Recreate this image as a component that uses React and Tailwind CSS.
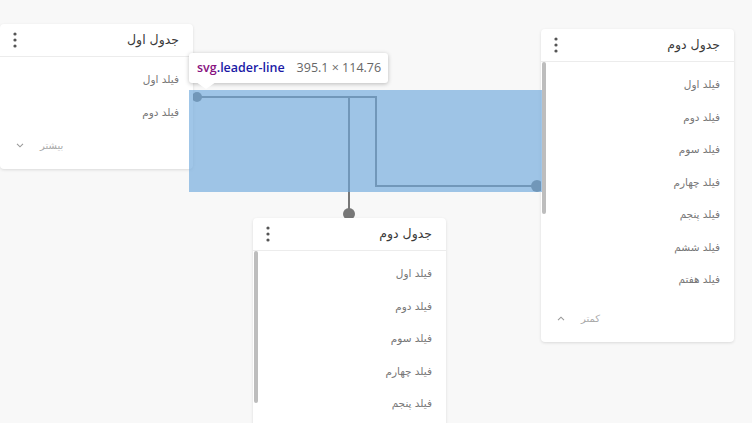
import React from "react";

const persian = { fontFamily: '"DejaVu Sans", "Noto Sans", sans-serif' };

function Dots() {
  return (
    <svg width="6" height="16" viewBox="0 0 6 16" className="text-[#555]">
      <circle cx="3" cy="2" r="1.6" fill="currentColor" />
      <circle cx="3" cy="8" r="1.6" fill="currentColor" />
      <circle cx="3" cy="14" r="1.6" fill="currentColor" />
    </svg>
  );
}

function Chevron({ up }) {
  return (
    <svg width="8" height="5" viewBox="0 0 8 5" className="text-[#999]">
      <path
        d={up ? "M1 4.2 L4 1.2 L7 4.2" : "M1 0.8 L4 3.8 L7 0.8"}
        fill="none"
        stroke="currentColor"
        strokeWidth="1.1"
      />
    </svg>
  );
}

function TableCard({ title, fields, more, scroll, className }) {
  return (
    <div
      dir="rtl"
      style={persian}
      className={`absolute w-[193px] bg-white rounded-[4px] shadow-[0_1px_3px_rgba(0,0,0,0.12)] ${className}`}
    >
      <div className="h-[33px] flex items-center justify-between pr-[14px] pl-[12px] border-b border-[#ececec]">
        <span className="text-[12.5px] text-[#3a3a3a]">{title}</span>
        <Dots />
      </div>
      <div className={`relative pt-[7px] overflow-hidden ${scroll ? "h-[240px]" : ""}`}>
        {scroll && (
          <div className="absolute left-[1px] top-0 w-[4px] h-[152px] bg-[#bdbdbd] rounded-[2px]" />
        )}
        {fields.map((f) => (
          <div key={f} className="h-[32.5px] flex items-center pr-[14px] text-[10.5px] text-[#777]">
            {f}
          </div>
        ))}
      </div>
      {more && (
        <div dir="ltr" className="h-[32px] flex items-center gap-[16px] pl-[16px] mb-[8px]">
          <Chevron up={more.up} />
          <span className="text-[10px] text-[#aaa]" dir="rtl">
            {more.label}
          </span>
        </div>
      )}
    </div>
  );
}

export default function App() {
  const fields = [
    "فیلد اول",
    "فیلد دوم",
    "فیلد سوم",
    "فیلد چهارم",
    "فیلد پنجم",
    "فیلد ششم",
    "فیلد هفتم",
  ];

  return (
    <div className="relative w-[752px] h-[423px] bg-[#f8f8f8] overflow-hidden">
      {/* connector lines */}
      <svg className="absolute inset-0" width="752" height="423">
        <path d="M197 97 H376 V186 H537" fill="none" stroke="#777" strokeWidth="2" />
        <path d="M349 97 V214" fill="none" stroke="#777" strokeWidth="2" />
        <circle cx="197" cy="97" r="5" fill="#777" />
        <circle cx="537" cy="186" r="6" fill="#777" />
        <circle cx="349" cy="214" r="6" fill="#777" />
      </svg>

      <TableCard
        title="جدول اول"
        fields={fields.slice(0, 2)}
        more={{ label: "بیشتر", up: false }}
        className="left-0 top-[24px]"
      />
      <TableCard
        title="جدول دوم"
        fields={fields}
        scroll
        more={{ label: "کمتر", up: true }}
        className="left-[541px] top-[29px]"
      />
      <TableCard
        title="جدول دوم"
        fields={fields.slice(0, 6)}
        scroll
        className="left-[253px] top-[218px]"
      />

      {/* devtools highlight */}
      <div className="absolute left-[189px] top-[90px] w-[353px] h-[102px] bg-[rgba(111,168,220,0.66)]" />

      <div className="absolute left-[189px] top-[53px] w-[199px] h-[30px] bg-white rounded-[3px] shadow-[0_1px_4px_rgba(0,0,0,0.25)] flex items-center pl-[8px]" style={{ fontFamily: '"Open Sans", sans-serif' }}>
        <span className="text-[12.5px] font-semibold text-[#881280]">svg</span>
        <span className="text-[12.5px] font-semibold text-[#1a1aa6]">.leader-line</span>
        <span className="ml-[12px] text-[12.5px] text-[#666]">395.1 × 114.76</span>
        <div className="absolute left-[7px] top-[29px] w-0 h-0 border-l-[10px] border-r-[10px] border-t-[7px] border-l-transparent border-r-transparent border-t-white" />
      </div>
    </div>
  );
}
